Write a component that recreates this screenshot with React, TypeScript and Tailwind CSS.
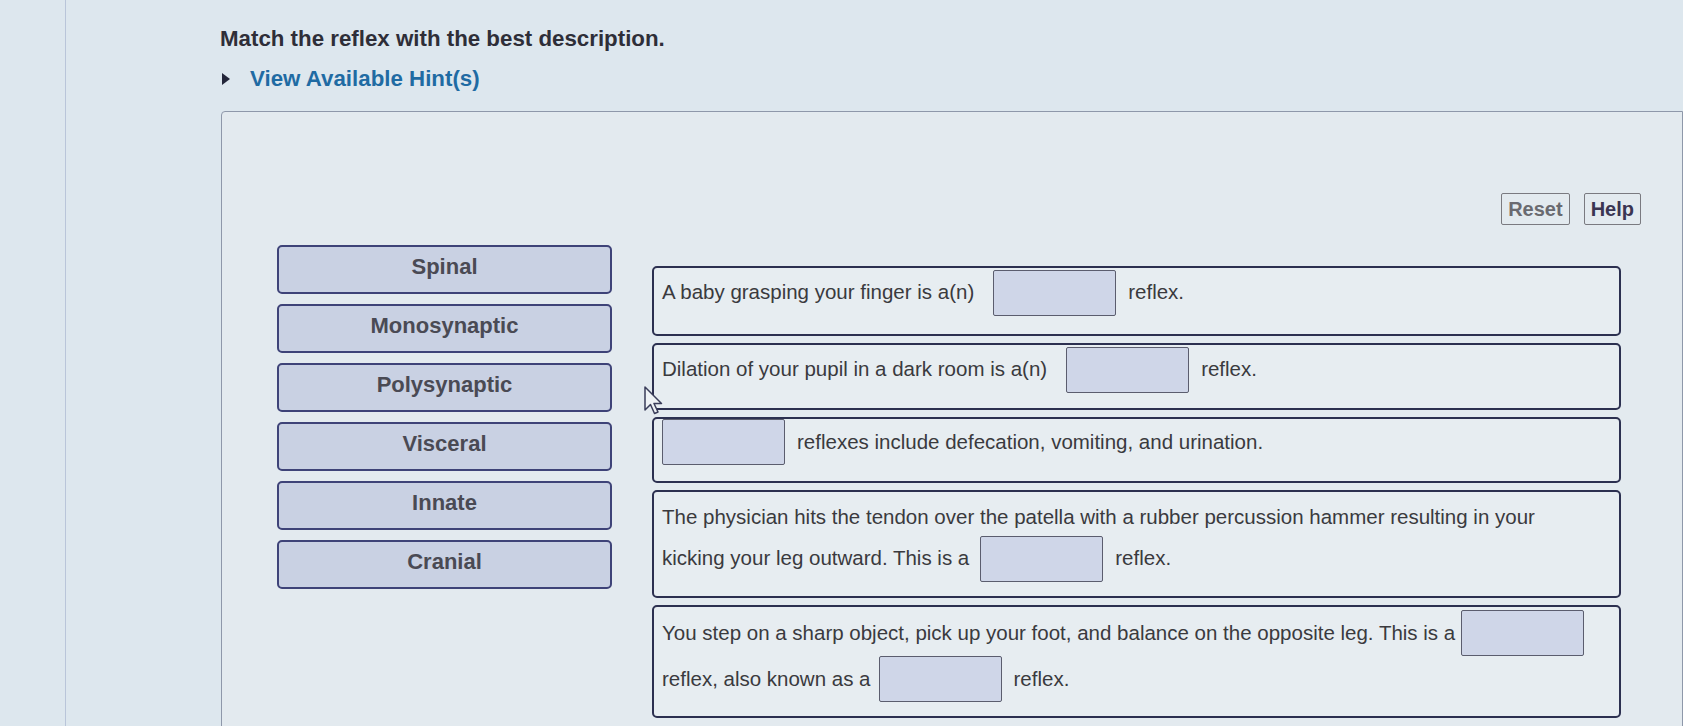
import React from "react";

const font = { fontFamily: '"Liberation Sans", Arial, sans-serif' };

const choices = ["Spinal", "Monosynaptic", "Polysynaptic", "Visceral", "Innate", "Cranial"];

function Drop() {
  return <span className="inline-block w-[123px] h-[46px] shrink-0 rounded-[2px] border-[1.5px] border-[#5b5d6e] bg-[#cfd6e8]" />;
}

function Sentence({ className, children }: { className: string; children: React.ReactNode }) {
  return (
    <div className={"rounded-[5px] border-2 border-[#2c3050] bg-[#e7edf1] px-[8px] text-[20.5px] whitespace-nowrap text-[#3a3a3e] " + className}>
      {children}
    </div>
  );
}

export default function App() {
  return (
    <div style={font} className="relative flex w-[1683px] h-[726px] overflow-hidden bg-[#dde7ee]">
      <div className="w-[66px] shrink-0 border-r border-[#b9c5d9]" />
      <div className="flex-1 pl-[154px] pt-[26px]">
        <h1 className="text-[22.3px] leading-[26px] font-bold text-[#2e2e38]">
          Match the reflex with the best description.
        </h1>
        <div className="mt-[14px] flex items-center gap-[20px] pl-[2px]">
          <span className="inline-block h-0 w-0 border-y-[6px] border-l-[8px] border-y-transparent border-l-[#23263a]" />
          <span className="text-[22.3px] leading-[26px] font-bold text-[#1f6ba3]">View Available Hint(s)</span>
        </div>

        <div className="mt-[19px] ml-[1px] h-[700px] rounded-tl-[4px] border border-[#8e98aa] bg-[#e3eaef] pt-[81px]">
          <div className="flex justify-end gap-[14px] pr-[41px]">
            <button className="h-[32px] px-[6px] rounded-[2px] border border-[#7a7a80] text-[20px] font-bold text-[#6a6a70]">
              Reset
            </button>
            <button className="h-[32px] px-[6px] rounded-[2px] border border-[#7a7a80] text-[20px] font-bold text-[#3a3552]">
              Help
            </button>
          </div>

          <div className="mt-[20px] flex gap-[40px] pl-[55px]">
            <div className="flex w-[335px] shrink-0 flex-col gap-[10px]">
              {choices.map(c => (
                <div
                  key={c}
                  className="h-[49px] rounded-[5px] border-2 border-[#3e4378] bg-[#c9d1e3] pt-[8px] text-center text-[22px] leading-[24px] font-bold text-[#4a4a54]"
                >
                  {c}
                </div>
              ))}
            </div>

            <div className="mt-[21px] flex w-[969px] shrink-0 flex-col gap-[7px]">
              <Sentence className="pt-[1px] pb-[18px]">
                <div className="flex h-[47px] items-center">
                  <span className="mr-[19px]">A baby grasping your finger is a(n)</span>
                  <Drop />
                  <span className="ml-[12px]">reflex.</span>
                </div>
              </Sentence>
              <Sentence className="pt-[1px] pb-[15px]">
                <div className="flex h-[47px] items-center">
                  <span className="mr-[19px]">Dilation of your pupil in a dark room is a(n)</span>
                  <Drop />
                  <span className="ml-[12px]">reflex.</span>
                </div>
              </Sentence>
              <Sentence className="pt-0 pb-[16px]">
                <div className="flex h-[46px] items-center">
                  <Drop />
                  <span className="ml-[12px]">reflexes include defecation, vomiting, and urination.</span>
                </div>
              </Sentence>
              <Sentence className="pt-[7px] pb-[14px]">
                <div className="flex h-[36px] items-center">
                  The physician hits the tendon over the patella with a rubber percussion hammer resulting in your
                </div>
                <div className="flex h-[47px] items-center">
                  <span className="mr-[11px]">kicking your leg outward. This is a</span>
                  <Drop />
                  <span className="ml-[12px]">reflex.</span>
                </div>
              </Sentence>
              <Sentence className="pt-[3px] pb-[14px]">
                <div className="flex h-[46px] items-center">
                  <span className="mr-[6px]">You step on a sharp object, pick up your foot, and balance on the opposite leg. This is a</span>
                  <Drop />
                </div>
                <div className="flex h-[46px] items-center">
                  <span className="mr-[8px]">reflex, also known as a</span>
                  <Drop />
                  <span className="ml-[12px]">reflex.</span>
                </div>
              </Sentence>
            </div>
          </div>
        </div>
      </div>

      <svg className="absolute left-[644px] top-[386px]" width="20" height="30" viewBox="0 0 20 30">
        <path d="M1 1 L1 24 L6.5 18.5 L10.5 27.5 L14 26 L10 17.5 L17.5 17.5 Z" fill="#eef2f5" stroke="#3a3d5a" strokeWidth="1.5" strokeLinejoin="round" />
      </svg>
    </div>
  );
}
